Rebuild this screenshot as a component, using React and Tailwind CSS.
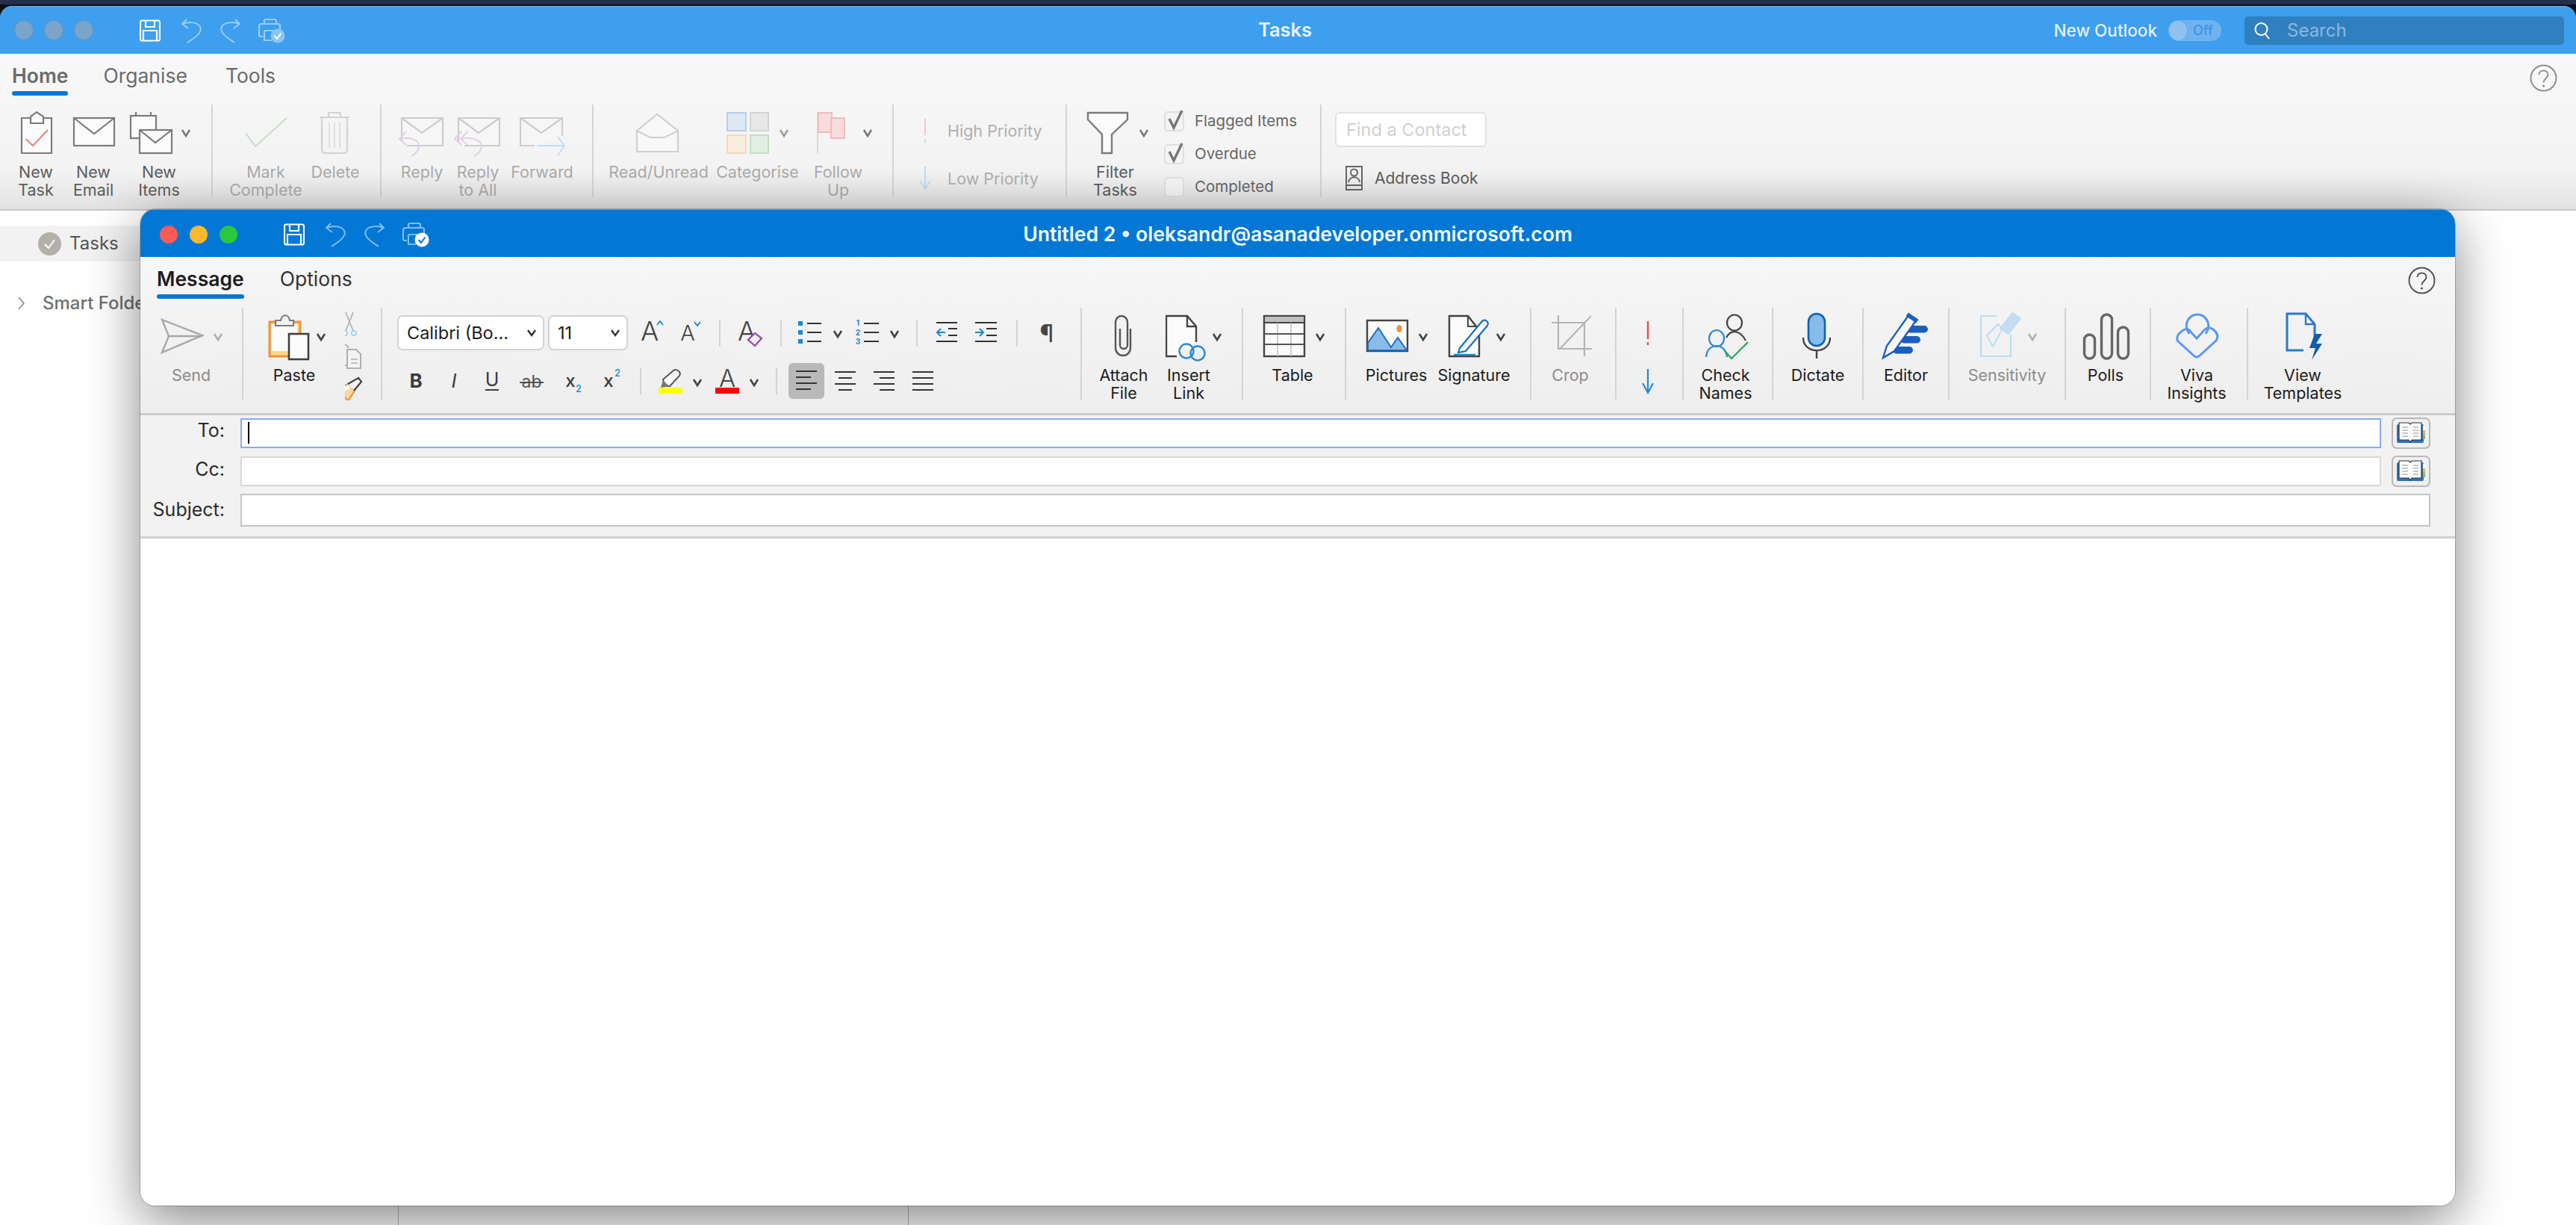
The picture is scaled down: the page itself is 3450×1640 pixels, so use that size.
import React from "react";

const Chev = ({ x, y, c = "#444" }) => (
  <path d={`M${x - 5} ${y - 4}L${x} ${y + 4}L${x + 5} ${y - 4}`} stroke={c} strokeWidth="2.6" fill="none" />
);

function Tool({ w, vb, lines, tone = "text-[#1c1c1c]", labelClass = "", children }) {
  return (
    <div className={`${w} shrink-0 flex flex-col pt-[4px]`}>
      <svg viewBox={vb} className="block w-full h-[70px]" fill="none">
        {children}
      </svg>
      <div className={`mt-[4px] text-[21.5px] leading-[24px] whitespace-nowrap ${tone} ${labelClass}`}>
        {lines.map((l) => (
          <div key={l} className="flex justify-center">{l}</div>
        ))}
      </div>
    </div>
  );
}

const Sep = () => <div className="w-[2px] h-[124px] shrink-0 bg-[#d4d4d4]" />;
const MiniSep = () => <div className="w-[2px] h-[36px] shrink-0 bg-[#d4d4d4]" />;

function Cell({ w, vb, className = "", children }) {
  return (
    <svg viewBox={vb} className={`block shrink-0 h-[47px] ${w} ${className}`} fill="none">
      {children}
    </svg>
  );
}

function Select({ w, label }) {
  return (
    <div className={`${w} h-[47px] shrink-0 flex items-center justify-between pl-[11px] pr-[8px] bg-white border-2 border-[#d2d2d2] rounded-[7px] text-[23.5px] text-[#1c1c1c]`}>
      <span>{label}</span>
      <svg width="14" height="12" viewBox="0 0 14 12" fill="none">
        <path d="M2 2L7 9L12 2" stroke="#333" strokeWidth="2.4" />
      </svg>
    </div>
  );
}

function Lights({ colors, d, className }) {
  return (
    <div className={`flex items-center ${className}`}>
      {colors.map((c, i) => (
        <div key={i} className={`${d} rounded-full ${c}`} />
      ))}
    </div>
  );
}

function QuickBar({ stroke, dim, badge, check }) {
  return (
    <div className="flex items-center ml-[62px]">
      <svg width="28" height="30" viewBox="0 0 28 30" fill="none" stroke={stroke} strokeWidth="2.2">
        <path d="M3 1.5H25Q27 1.5 27 4V26Q27 28.5 25 28.5H3Q1 28.5 1 26V4Q1 1.5 3 1.5Z" />
        <path d="M8 1.5V10H20V1.5M5 28.5V15H23V28.5" />
      </svg>
      <svg width="28" height="34" viewBox="0 0 28 34" fill="none" stroke={dim} strokeWidth="2" className="ml-[27px]">
        <path d="M8 2L2 8L10 14M2 8C16 3 30 8 26 18C24 24 16 28 9 33" />
      </svg>
      <svg width="28" height="34" viewBox="0 0 28 34" fill="none" stroke={dim} strokeWidth="2" className="ml-[25px]">
        <path d="M20 2L26 8L18 14M26 8C12 3 -2 8 2 18C4 24 12 28 19 33" />
      </svg>
      <svg width="36" height="34" viewBox="0 0 36 34" fill="none" stroke={dim} strokeWidth="2.2" className="ml-[23px]">
        <path d="M8 8V4Q8 2 10 2H22Q24 2 24 4V8" />
        <path d="M6 25H3Q1 25 1 23V11Q1 8 4 8H27Q29 8 29 11V16" />
        <path d="M8 17H20M8 17V30H18" />
        <circle cx="26" cy="24" r="9.5" fill={badge} stroke="none" />
        <path d="M21.5 24L25 28L30.5 20.5" stroke={check} strokeWidth="2" />
      </svg>
    </div>
  );
}

function Help({ c, className }) {
  return (
    <svg width="37" height="37" viewBox="0 0 37 37" fill="none" className={className}>
      <circle cx="18.5" cy="18.5" r="17" stroke={c} strokeWidth="2" />
      <path d="M12.5 14C12.5 6.5 24.5 6.5 24.5 14C24.5 19 18.5 19 18.5 24.5" stroke={c} strokeWidth="2" />
      <circle cx="18.5" cy="29" r="1.6" fill={c} />
    </svg>
  );
}

function BackCheck({ checked, label }) {
  return (
    <div className="flex items-center h-[27px]">
      <div className="relative w-[27px] h-[27px] rounded-[5px] bg-[#f4f4f4] border-2 border-[#e0e0e0]">
        {checked && (
          <svg width="28" height="34" viewBox="0 0 28 34" fill="none" className="absolute left-0 -top-[7px]">
            <path d="M5 15L11 27L22 4" stroke="#777" strokeWidth="3.4" />
          </svg>
        )}
      </div>
      <span className="ml-[14px] text-[20.5px] text-[#666]">{label}</span>
    </div>
  );
}

function BackWindow() {
  const faint = "text-[#ababab]";
  const on = "text-[#5c5c5c]";
  return (
    <div className="w-full h-full flex flex-col">
      <div className="h-[8px] shrink-0 bg-[#222f4c] border-b-2 border-[#0b0f18]" />
      <div className="bg-[#0b0f18] shrink-0">
        <div className="h-[64px] flex items-center bg-[#3d9fed] border-t border-[#6db6f0] rounded-t-[16px]">
          <div className="flex-1 flex items-center">
            <Lights
              colors={["bg-[#7ba4cb]", "bg-[#7ba4cb]", "bg-[#7ba4cb]"]}
              d="w-[26px] h-[27px] border border-[#5f93c4]"
              className="pl-[19px] gap-[14px]"
            />
            <QuickBar stroke="#ffffff" dim="#9accf5" badge="#8cc4f4" check="#ffffff" />
          </div>
          <div className="pl-[8px] text-[25.5px] font-semibold text-[#e8f3fd]">Tasks</div>
          <div className="flex-1 flex items-center justify-end pr-[16px]">
            <span className="text-[22.5px] font-medium text-[#e2f0fc]">New Outlook</span>
            <div className="ml-[15px] w-[71px] h-[28px] rounded-full bg-[#6fb3ee] flex items-center">
              <div className="w-[26px] h-[28px] rounded-full bg-[#8fc2f0] border border-[#6aa9e2]" />
              <span className="ml-[7px] text-[18px] font-medium text-[#3a94e6]">Off</span>
            </div>
            <div className="ml-[31px] w-[428px] h-[38px] rounded-[5px] bg-[#3080c0] flex items-center pl-[12px]">
              <svg width="24" height="24" viewBox="0 0 24 24" fill="none" stroke="#fff" strokeWidth="2">
                <circle cx="10.5" cy="10" r="8" />
                <path d="M16 16.5L21 23" />
              </svg>
              <span className="ml-[21px] text-[24px] text-[#8db7de]">Search</span>
            </div>
          </div>
        </div>
      </div>

      <div className="h-[208px] shrink-0 bg-linear-to-b from-[#f8f8f8] via-[#f3f3f3] via-75% to-[#e2e2e2]">
        <div className="h-[68px] flex items-start pt-[13px] pl-[16px] pr-[25px] text-[26.5px] leading-[32px] text-[#6b6b6b]">
          <div className="flex flex-col">
            <span className="font-semibold">Home</span>
            <div className="mt-[5px] h-[6px] rounded-full bg-[#0277d4]" />
          </div>
          <span className="ml-[47px]">Organise</span>
          <span className="ml-[51px]">Tools</span>
          <Help c="#8f8f8f" className="ml-auto mt-[1px]" />
        </div>
        <div className="flex items-start pl-[10px]">
          <Tool w="w-[76px]" vb="10 144 76 70" lines={["New", "Task"]} tone={on}>
            <path d="M29 158H41V156L49 150L58 156V158H69V205H29Z" fill="#fbfbfb" stroke="#7c7c7c" strokeWidth="2.2" />
            <path d="M41 158V165H58V158" stroke="#7c7c7c" strokeWidth="2.2" />
            <path d="M34.5 186L44 195L64 174" stroke="#f07f7f" strokeWidth="2" />
          </Tool>
          <Tool w="w-[78px]" vb="86 144 78 70" lines={["New", "Email"]} tone={on}>
            <rect x="99" y="158" width="54" height="37" fill="#fbfbfb" stroke="#7c7c7c" strokeWidth="2.2" />
            <path d="M99 158L126 179L153 158" stroke="#7c7c7c" strokeWidth="2.2" />
          </Tool>
          <Tool w="w-[119px]" vb="164 144 119 70" lines={["New", "Items"]} tone={on} labelClass="pr-[21px]">
            <rect x="175" y="155" width="34" height="30" fill="#fbfbfb" stroke="#7c7c7c" strokeWidth="2.2" />
            <path d="M182 150V155M202 150V155" stroke="#7c7c7c" strokeWidth="2.2" />
            <rect x="187" y="174" width="43" height="31" fill="#fbfbfb" stroke="#7c7c7c" strokeWidth="2.2" />
            <path d="M187 174L208 191L230 174" stroke="#7c7c7c" strokeWidth="2.2" />
            <Chev x={249} y={178} c="#7c7c7c" />
          </Tool>
          <Sep />
          <Tool w="w-[142px]" vb="285 144 142 70" lines={["Mark", "Complete"]} tone={faint}>
            <path d="M329 178L342 196L384 158" stroke="#c8dcc8" strokeWidth="2" />
          </Tool>
          <Tool w="w-[82px]" vb="427 144 82 70" lines={["Delete"]} tone={faint} labelClass="pr-[38px]">
            <path d="M428 157H468M440 157V151H456V157" stroke="#d2d2d2" strokeWidth="2.2" />
            <path d="M431 158V200Q431 205 436 205H460Q465 205 465 200V158" stroke="#d2d2d2" strokeWidth="2.2" />
            <path d="M441 164V198M448 164V198M455 164V198" stroke="#d8d8d8" strokeWidth="1.4" />
          </Tool>
          <Sep />
          <Tool w="w-[92px]" vb="511 144 92 70" lines={["Reply"]} tone={faint} labelClass="pl-[16px]">
            <path d="M545 195H593V158H538V190" stroke="#cccccc" strokeWidth="2.2" fill="#f6f6f6" />
            <path d="M538 158L565 178L593 158" stroke="#cccccc" strokeWidth="2.2" />
            <path d="M544 176L535 186L544 194M535 186C552 182 566 190 560 200C558 204 555 207 551 209" stroke="#e2cfe8" strokeWidth="2" />
          </Tool>
          <Tool w="w-[74px]" vb="603 144 74 70" lines={["Reply", "to All"]} tone={faint}>
            <path d="M622 195H669V158H614V190" stroke="#cccccc" strokeWidth="2.2" fill="#f6f6f6" />
            <path d="M614 158L641 178L669 158" stroke="#cccccc" strokeWidth="2.2" />
            <path d="M618 176L609 186L618 194M626 176L617 186L626 194M617 186C634 182 650 190 644 200C642 204 639 207 635 209" stroke="#e2cfe8" strokeWidth="2" />
          </Tool>
          <Tool w="w-[116px]" vb="677 144 116 70" lines={["Forward"]} tone={faint} labelClass="pr-[18px]">
            <path d="M716 195H697V158H753V182" stroke="#cccccc" strokeWidth="2.2" fill="#f6f6f6" />
            <path d="M697 158L725 178L753 158" stroke="#cccccc" strokeWidth="2.2" />
            <path d="M720 195H755M747 183L756 195L747 208" stroke="#c3dcf5" strokeWidth="2" />
          </Tool>
          <Sep />
          <Tool w="w-[154px]" vb="795 144 154 70" lines={["Read/Unread"]} tone={faint} labelClass="pl-[20px]">
            <path d="M853 175L880 153L908 175V203H853Z" fill="#f8f8f8" stroke="#d0d0d0" strokeWidth="2.2" />
            <path d="M853 175L871 184H890L908 175" stroke="#d0d0d0" strokeWidth="2.2" />
          </Tool>
          <Tool w="w-[127px]" vb="949 144 127 70" lines={["Categorise"]} tone={faint} labelClass="pl-[4px]">
            <rect x="974" y="151" width="25" height="24" fill="#dfe9f3" stroke="#b6cfe9" strokeWidth="2" />
            <rect x="1005" y="151" width="24" height="24" fill="#e8e8e8" stroke="#d4d4d4" strokeWidth="2" />
            <rect x="974" y="181" width="25" height="24" fill="#f8ecdd" stroke="#f3d9bc" strokeWidth="2" />
            <rect x="1005" y="181" width="24" height="24" fill="#e2eee2" stroke="#c4dec4" strokeWidth="2" />
            <Chev x={1050} y={178} c="#a0a0a0" />
          </Tool>
          <Tool w="w-[119px]" vb="1076 144 119 70" lines={["Follow", "Up"]} tone={faint} labelClass="pr-[26px]">
            <path d="M1095 150V206" stroke="#d4d4d4" strokeWidth="1.6" />
            <rect x="1096" y="151" width="18" height="26" fill="#f9dcdc" stroke="#f4baba" strokeWidth="2" />
            <rect x="1113" y="158" width="18" height="27" fill="#f9dcdc" stroke="#f4baba" strokeWidth="2" />
            <Chev x={1162} y={178} c="#777" />
          </Tool>
          <Sep />
          <div className="w-[230px] shrink-0 flex flex-col text-[21.5px] text-[#b0b0b0]">
            <div className="flex items-center h-[32px] mt-[19px]">
              <svg viewBox="1197 159 72 32" className="w-[72px] h-[32px] shrink-0" fill="none">
                <path d="M1239 159V181M1239 186V191" stroke="#f0c8c8" strokeWidth="2" />
              </svg>
              <span>High Priority</span>
            </div>
            <div className="flex items-center h-[32px] mt-[32px]">
              <svg viewBox="1197 223 72 32" className="w-[72px] h-[32px] shrink-0" fill="none">
                <path d="M1239 223V253M1232 242L1239 253L1246 242" stroke="#bcdcf5" strokeWidth="2" />
              </svg>
              <span>Low Priority</span>
            </div>
          </div>
          <Sep />
          <Tool w="w-[126px]" vb="1429 144 126 70" lines={["Filter", "Tasks"]} tone={on} labelClass="pl-[3px]">
            <path d="M1457 151H1510V160L1489 180V205H1476V180L1457 160Z" fill="#fbfbfb" stroke="#7c7c7c" strokeWidth="2.4" />
            <Chev x={1532} y={178} c="#7c7c7c" />
          </Tool>
          <div className="w-[213px] shrink-0 flex flex-col gap-[17px] pl-[4px] pt-[9px]">
            <BackCheck checked label="Flagged Items" />
            <BackCheck checked label="Overdue" />
            <BackCheck label="Completed" />
          </div>
          <Sep />
          <div className="flex flex-col">
            <div className="ml-[18px] mt-[10px] w-[203px] h-[47px] flex items-center pl-[13px] bg-white border-2 border-[#e2e2e2] rounded-[6px] text-[23.5px] text-[#d0d0d0]">
              Find a Contact
            </div>
            <div className="ml-[31px] mt-[25px] flex items-center">
              <svg width="24" height="33" viewBox="0 0 24 33" fill="none" stroke="#666" strokeWidth="2">
                <rect x="2" y="1" width="21" height="31" />
                <path d="M2 26H23" />
                <circle cx="12.5" cy="9" r="4.5" />
                <path d="M5 22C6 13 19 13 20 22" />
              </svg>
              <span className="ml-[16px] text-[21px] text-[#5c5c5c]">Address Book</span>
            </div>
          </div>
        </div>
      </div>

      <div className="flex-1 flex border-t-2 border-[#c8c8c8]">
        <div className="w-[534px] shrink-0 border-r border-[#b8b8b8] text-[24px]">
          <div className="mt-[20px] h-[48px] flex items-center pl-[51px] bg-[#f2f2f2] text-[#555]">
            <svg width="31" height="31" viewBox="0 0 31 31" fill="none">
              <circle cx="15.5" cy="15.5" r="15.5" fill="#b3afaa" />
              <path d="M9 16L14 21L22 10" stroke="#fff" strokeWidth="2" />
            </svg>
            <span className="ml-[11px]">Tasks</span>
          </div>
          <div className="mt-[32px] h-[48px] flex items-center pl-[24px] text-[#707070] font-medium">
            <svg width="9" height="18" viewBox="0 0 9 18" fill="none">
              <path d="M1 1L8 9L1 17" stroke="#888" strokeWidth="1.6" />
            </svg>
            <span className="ml-[24px] whitespace-nowrap">Smart Folders</span>
          </div>
        </div>
        <div className="w-[683px] shrink-0 border-r border-[#b8b8b8]" />
      </div>
    </div>
  );
}

function Ribbon() {
  const off = "text-[#8c8c8c]";
  return (
    <div className="flex items-start">
      <Tool w="w-[136px]" vb="188 416 136 70" lines={["Send"]} tone={off}>
        <path d="M217 428L271 449L217 472L226 450Z" stroke="#a8a8a8" strokeWidth="2.4" />
        <path d="M226 450H271" stroke="#a8a8a8" strokeWidth="2.4" />
        <Chev x={292} y={451} c="#b0b0b0" />
      </Tool>
      <Sep />
      <Tool w="w-[136px]" vb="326 416 136 70" lines={["Paste"]}>
        <rect x="361" y="431" width="41" height="46" fill="#fbd98d" stroke="#f0923a" strokeWidth="3" />
        <rect x="364" y="434" width="34" height="36" fill="#fbfbfb" />
        <path d="M369 436V429H376C377 420 387 420 388 429H393V436Z" fill="#f4f4f4" stroke="#7c7c7c" strokeWidth="2.2" />
        <rect x="387" y="447" width="26" height="34" fill="#fbfbfb" stroke="#404040" strokeWidth="2.6" />
        <Chev x={430} y={451} />
      </Tool>
      <svg viewBox="462 412 48 124" className="block w-[48px] h-[124px] shrink-0" fill="none">
        <path d="M463 418L473 443M473 418L463 443" stroke="#b4b4b4" strokeWidth="1.8" />
        <circle cx="462" cy="446" r="3.2" stroke="#a8cdf0" strokeWidth="1.8" />
        <circle cx="474" cy="446" r="3.2" stroke="#a8cdf0" strokeWidth="1.8" />
        <path d="M465 489H453V462H464L467 466" stroke="#b0b0b0" strokeWidth="2" />
        <path d="M465 468H477L483 474V493H465Z" fill="#f3f3f3" stroke="#b0b0b0" strokeWidth="2" />
        <path d="M470 481H479M470 486H479" stroke="#b0b0b0" strokeWidth="1.4" />
        <path d="M453 521L466 514L475 523L466 537Z" fill="#fbd59a" stroke="#f0923a" strokeWidth="2.2" />
        <path d="M457 520L466 515L470 519L461 524Z" fill="#fbfbfb" />
        <path d="M466 514L480 506L484 511L474 523" fill="#f4f4f4" stroke="#404040" strokeWidth="2.2" />
      </svg>
      <Sep />
      <div className="w-[935px] shrink-0 flex flex-col pl-[20px] pt-[10px] text-[#404040]">
        <div className="flex items-center">
          <Select w="w-[197px]" label="Calibri (Bo..." />
          <div className="ml-[5px]" />
          <Select w="w-[107px]" label="11" />
          <Cell w="w-[59px]" vb="841 422 59 47">
            <text x="870" y="456" textAnchor="middle" fontSize="36" fontWeight="300" fill="#444">A</text>
            <path d="M880 435L884 430L888 435" stroke="#1e88d2" strokeWidth="2" />
          </Cell>
          <Cell w="w-[63px]" vb="900 422 63 47">
            <text x="921" y="456" textAnchor="middle" fontSize="29" fontWeight="300" fill="#444">A</text>
            <path d="M930 431L934 436L938 431" stroke="#1e88d2" strokeWidth="2" />
          </Cell>
          <MiniSep />
          <Cell w="w-[80px]" vb="965 422 80 47">
            <text x="1000" y="456" textAnchor="middle" fontSize="36" fontWeight="300" fill="#444">A</text>
            <path d="M1011 446L1020 453L1011 463L1002 455Z" fill="#f3f3f3" stroke="#9c3fb0" strokeWidth="2.2" />
          </Cell>
          <MiniSep />
          <Cell w="w-[86px]" vb="1047 422 86 47">
            <rect x="1069" y="430" width="6" height="6" fill="#1e88d2" />
            <rect x="1069" y="442" width="6" height="6" fill="#1e88d2" />
            <rect x="1069" y="454" width="6" height="6" fill="#1e88d2" />
            <path d="M1081 433H1100M1081 445H1100M1081 457H1100" stroke="#333" strokeWidth="2" />
            <Chev x={1122} y={447} />
          </Cell>
          <Cell w="w-[94px]" vb="1133 422 94 47">
            <text x="1149" y="436" textAnchor="middle" fontSize="10" fontWeight="700" fill="#1e88d2">1</text>
            <text x="1149" y="449" textAnchor="middle" fontSize="10" fontWeight="700" fill="#1e88d2">2</text>
            <text x="1149" y="461" textAnchor="middle" fontSize="10" fontWeight="700" fill="#1e88d2">3</text>
            <path d="M1157 433H1177M1157 445H1177M1157 457H1177" stroke="#333" strokeWidth="2" />
            <Chev x={1198} y={447} />
          </Cell>
          <MiniSep />
          <Cell w="w-[66px]" vb="1229 422 66 47">
            <path d="M1254 432H1282M1254 457H1282M1270 440H1282M1270 449H1282" stroke="#333" strokeWidth="2" />
            <path d="M1266 445H1255M1260 440L1255 445L1260 450" stroke="#1e88d2" strokeWidth="2" />
          </Cell>
          <Cell w="w-[66px]" vb="1295 422 66 47">
            <path d="M1306 432H1335M1306 457H1335M1321 440H1335M1321 449H1335" stroke="#333" strokeWidth="2" />
            <path d="M1306 445H1317M1312 440L1317 445L1312 450" stroke="#1e88d2" strokeWidth="2" />
          </Cell>
          <MiniSep />
          <Cell w="w-[84px]" vb="1363 422 84 47">
            <text x="1402" y="458" textAnchor="middle" fontSize="32" fontWeight="400" fill="#444">¶</text>
          </Cell>
        </div>
        <div className="flex items-center mt-[17px]">
          <Cell w="w-[50px]" vb="532 486 50 47">
            <text x="557" y="518" textAnchor="middle" fontSize="26" fontWeight="700" fill="#3c3c3c">B</text>
          </Cell>
          <Cell w="w-[51px]" vb="582 486 51 47">
            <text x="608" y="518" textAnchor="middle" fontSize="26" fontStyle="italic" fill="#3c3c3c">I</text>
          </Cell>
          <Cell w="w-[52px]" vb="633 486 52 47">
            <text x="659" y="516" textAnchor="middle" fontSize="25" fill="#3c3c3c">U</text>
            <path d="M650 521H668" stroke="#3c3c3c" strokeWidth="2" />
          </Cell>
          <Cell w="w-[55px]" vb="685 486 55 47">
            <text x="712" y="518" textAnchor="middle" fontSize="23" fill="#555">ab</text>
            <path d="M696 511H728" stroke="#444" strokeWidth="1.8" />
          </Cell>
          <Cell w="w-[52px]" vb="740 486 52 47">
            <text x="764" y="517" textAnchor="middle" fontSize="24" fontWeight="500" fill="#3c3c3c">x</text>
            <text x="775" y="524" textAnchor="middle" fontSize="13" fontWeight="500" fill="#1e88d2">2</text>
          </Cell>
          <Cell w="w-[65px]" vb="792 486 65 47">
            <text x="815" y="517" textAnchor="middle" fontSize="24" fontWeight="500" fill="#3c3c3c">x</text>
            <text x="827" y="503" textAnchor="middle" fontSize="13" fontWeight="500" fill="#1e88d2">2</text>
          </Cell>
          <MiniSep />
          <Cell w="w-[86px]" vb="859 486 86 47">
            <path d="M888 507L902 495C906 492 913 497 910 502L897 516H889Z" fill="#f8f8f8" stroke="#555" strokeWidth="2" />
            <path d="M885 518L888 508L896 516Z" fill="#777" />
            <rect x="882" y="518" width="32" height="8" fill="#ffff00" />
            <Chev x={934} y={511} />
          </Cell>
          <Cell w="w-[94px]" vb="945 486 94 47">
            <text x="974" y="517" textAnchor="middle" fontSize="33" fontWeight="300" fill="#444">A</text>
            <rect x="958" y="518" width="32" height="8" fill="#ff0000" />
            <Chev x={1010} y={511} />
          </Cell>
          <MiniSep />
          <div className="ml-[15px] w-[48px] h-[48px] shrink-0 rounded-[6px] bg-[#b9b9b9]">
            <Cell w="w-[48px]" vb="1056 486 48 47">
              <path d="M1066 497H1094M1066 505H1086M1066 513H1094M1066 521H1086" stroke="#333" strokeWidth="2" />
            </Cell>
          </div>
          <Cell w="w-[54px]" vb="1104 486 54 47">
            <path d="M1118 497H1146M1123 505H1141M1118 513H1146M1123 521H1141" stroke="#333" strokeWidth="2" />
          </Cell>
          <Cell w="w-[52px]" vb="1158 486 52 47">
            <path d="M1170 497H1198M1178 505H1198M1170 513H1198M1178 521H1198" stroke="#333" strokeWidth="2" />
          </Cell>
          <Cell w="w-[52px]" vb="1210 486 52 47">
            <path d="M1222 497H1250M1222 505H1250M1222 513H1250M1222 521H1250" stroke="#333" strokeWidth="2" />
          </Cell>
        </div>
      </div>
      <Sep />
      <Tool w="w-[112px]" vb="1449 416 112 70" lines={["Attach", "File"]}>
        <path d="M1514 440V466A10 10 0 0 1 1494 466V431A8 8 0 0 1 1510 431V462A5 5 0 0 1 1500 462V440" stroke="#555" strokeWidth="2.4" />
      </Tool>
      <Tool w="w-[102px]" vb="1561 416 102 70" lines={["Insert", "Link"]} labelClass="pr-[40px]">
        <path d="M1576 477H1562V423H1590L1602 437V458" fill="#fbfbfb" stroke="#444" strokeWidth="2.4" />
        <path d="M1590 423V437H1602" stroke="#444" strokeWidth="2.4" />
        <circle cx="1589" cy="470" r="9.5" stroke="#2a8ad4" strokeWidth="2.4" />
        <circle cx="1604" cy="473" r="9.5" stroke="#2a8ad4" strokeWidth="2.4" />
        <Chev x={1630} y={451} />
      </Tool>
      <Sep />
      <Tool w="w-[136px]" vb="1665 416 136 70" lines={["Table"]} labelClass="pr-[4px]">
        <rect x="1693" y="423" width="54" height="54" fill="#fbfbfb" stroke="#444" strokeWidth="2.4" />
        <rect x="1693" y="423" width="54" height="9" fill="#c0c0c0" stroke="#444" strokeWidth="2" />
        <path d="M1711 432V477M1729 432V477" stroke="#bbb" strokeWidth="1.4" />
        <path d="M1693 447H1747M1693 461H1747" stroke="#555" strokeWidth="2" />
        <Chev x={1768} y={451} />
      </Tool>
      <Sep />
      <Tool w="w-[134px]" vb="1803 416 134 70" lines={["Pictures"]}>
        <rect x="1831" y="429" width="54" height="41" fill="#fbfbfb" stroke="#444" strokeWidth="2.4" />
        <path d="M1832 459L1846 439L1863 465L1872 452L1884 469H1832Z" fill="#8abcea" stroke="#1a6fc0" strokeWidth="2" />
        <ellipse cx="1874" cy="440" rx="3.5" ry="5" fill="#f0923a" />
        <Chev x={1906} y={451} />
      </Tool>
      <Tool w="w-[112px]" vb="1937 416 112 70" lines={["Signature"]} labelClass="pr-[38px]">
        <path d="M1941 423H1966L1981 442V477H1941Z" fill="#fbfbfb" stroke="#444" strokeWidth="2.4" />
        <path d="M1966 423V437H1977" stroke="#444" strokeWidth="2" />
        <path d="M1955 466L1985 430C1988 426 1995 431 1992 436L1963 470L1953 472Z" fill="#fbfbfb" stroke="#1a6fc0" strokeWidth="2.2" />
        <path d="M1947 475H1976" stroke="#1e88d2" strokeWidth="2.4" />
        <Chev x={2010} y={451} />
      </Tool>
      <Sep />
      <Tool w="w-[112px]" vb="2051 416 112 70" lines={["Crop"]} tone={off} labelClass="pr-[8px]">
        <path d="M2087 422V467H2132M2078 432H2122V477" stroke="#b4b4b4" strokeWidth="2.2" />
        <path d="M2131 423L2089 467" stroke="#b4b4b4" strokeWidth="2" />
      </Tool>
      <Sep />
      <svg viewBox="2165 412 88 124" className="block w-[88px] h-[124px] shrink-0" fill="none">
        <path d="M2207 430V454M2207 458V462" stroke="#e84c4c" strokeWidth="2.4" />
        <path d="M2207 494V525M2200 513L2207 526L2214 513" stroke="#2a8ad4" strokeWidth="2.2" />
      </svg>
      <Sep />
      <Tool w="w-[118px]" vb="2255 416 118 70" lines={["Check", "Names"]} labelClass="pr-[6px]">
        <ellipse cx="2323" cy="432" rx="10" ry="10.5" stroke="#444" strokeWidth="2.2" />
        <path d="M2312 452C2318 441 2330 441 2338 456" stroke="#444" strokeWidth="2.2" />
        <ellipse cx="2299" cy="453" rx="10" ry="11" stroke="#2a8ad4" strokeWidth="2.2" />
        <path d="M2285 478C2286 465 2295 463 2299 463C2306 463 2312 469 2313 478" stroke="#2a8ad4" strokeWidth="2.2" />
        <path d="M2310 470L2319 480L2341 458" stroke="#22a84f" strokeWidth="2.2" />
      </Tool>
      <Sep />
      <Tool w="w-[119px]" vb="2375 416 119 70" lines={["Dictate"]}>
        <rect x="2422" y="420" width="22" height="43" rx="11" fill="#86bbea" stroke="#0f62b0" strokeWidth="2.6" />
        <path d="M2415 452C2415 475 2451 475 2451 452M2433 468V480" stroke="#444" strokeWidth="2.4" />
      </Tool>
      <Sep />
      <Tool w="w-[113px]" vb="2496 416 113 70" lines={["Editor"]}>
        <rect x="2552" y="436" width="30" height="9.5" rx="4.7" fill="#1a5fbf" />
        <rect x="2545" y="450" width="27" height="9.5" rx="4.7" fill="#1a5fbf" />
        <rect x="2535" y="464" width="27" height="9.5" rx="4.7" fill="#1a5fbf" />
        <path d="M2522 479L2527 463L2557 421L2567 428L2537 470Z" fill="#f8f8f8" stroke="#1a5fbf" strokeWidth="2.4" />
        <path d="M2556 420L2568 428L2566 431L2554 423Z" fill="#1a5fbf" stroke="#1a5fbf" strokeWidth="2" />
      </Tool>
      <Sep />
      <Tool w="w-[154px]" vb="2611 416 154 70" lines={["Sensitivity"]} tone={off}>
        <path d="M2674 423H2653V477H2693V448" stroke="#bcdcf2" strokeWidth="2.2" />
        <path d="M2679 440L2695 419L2706 426L2690 447Z" fill="#c5ddf0" stroke="#bcdcf2" strokeWidth="1.8" />
        <path d="M2661 449L2676 434L2682 440L2669 464Z" stroke="#bcdcf2" strokeWidth="2" />
        <Chev x={2722} y={451} c="#b0b0b0" />
      </Tool>
      <Sep />
      <Tool w="w-[112px]" vb="2767 416 112 70" lines={["Polls"]} labelClass="pr-[6px]">
        <rect x="2791.5" y="448" width="14" height="32" rx="7" stroke="#666" strokeWidth="3.4" />
        <rect x="2814.5" y="421" width="14" height="59" rx="7" stroke="#666" strokeWidth="3.4" />
        <rect x="2836.5" y="438" width="14" height="42" rx="7" stroke="#666" strokeWidth="3.4" />
      </Tool>
      <Sep />
      <Tool w="w-[128px]" vb="2881 416 128 70" lines={["Viva", "Insights"]} labelClass="pr-[6px]">
        <path d="M2932 447C2922 432 2934 421 2943 421C2952 421 2964 432 2954 447" stroke="#5b96f5" strokeWidth="3" />
        <path d="M2924 442Q2914 448 2916 456L2938 476Q2942 480 2946 476L2968 456Q2973 448 2964 441Q2958 436 2952 442L2942 453L2932 442Q2929 439 2924 442Z" stroke="#5b96f5" strokeWidth="3" />
      </Tool>
      <Sep />
      <Tool w="w-[146px]" vb="3011 416 146 70" lines={["View", "Templates"]}>
        <path d="M3085 469H3063V420H3088L3100 434V452" stroke="#2a78c8" strokeWidth="3" />
        <path d="M3088 420V434H3100" stroke="#2a78c8" strokeWidth="2.4" />
        <path d="M3100 447L3093 466H3101L3096 482L3110 460H3102L3110 447Z" fill="#0f5fa8" />
      </Tool>
    </div>
  );
}

function BookBtn() {
  return (
    <div className="ml-[14px] w-[52px] h-[42px] shrink-0 flex items-center justify-center rounded-[7px] bg-[#f0f0f0] border-2 border-[#b8b8b8]">
      <svg width="40" height="30" viewBox="0 0 40 30" fill="none">
        <rect x="1" y="3" width="36" height="25" rx="2" fill="#2f74bb" />
        <rect x="36" y="5" width="3" height="6" fill="#ffffff" />
        <rect x="36" y="11" width="3" height="6" fill="#e3b63c" />
        <rect x="36" y="17" width="3" height="6" fill="#8fb86a" />
        <path d="M4 1H17L19 3L21 1H34V24H21L19 27L17 24H4Z" fill="#fbfbfb" stroke="#333" strokeWidth="1.2" />
        <path d="M8 7H16M8 11H16M8 15H16M8 19H16M23 7H30M23 11H30M23 15H30M23 19H30" stroke="#b8b8b8" strokeWidth="1.6" />
      </svg>
    </div>
  );
}

function ComposeWindow() {
  return (
    <div className="absolute left-[188px] top-[280px] w-[3100px] h-[1334px] flex flex-col overflow-hidden rounded-[20px] bg-white shadow-[0_20px_70px_0_rgba(0,0,0,0.48),0_0_0_1px_rgba(0,0,0,0.2)]">
      <div className="h-[64px] shrink-0 flex items-center pt-[2px] bg-[#0277d4] border-t border-[#4f9fe2]">
        <div className="flex-1 flex items-center">
          <Lights
            colors={["bg-[#fb5b56]", "bg-[#fdb92e]", "bg-[#28c93f]"]}
            d="w-[24px] h-[24px]"
            className="pl-[26px] gap-[16px]"
          />
          <QuickBar stroke="#ffffff" dim="#7fbcee" badge="#ffffff" check="#0277d4" />
        </div>
        <div className="text-[26.6px] font-semibold text-[#f2f8fd] whitespace-nowrap">
          Untitled 2 • oleksandr@asanadeveloper.onmicrosoft.com
        </div>
        <div className="flex-1" />
      </div>

      <div className="h-[212px] shrink-0 bg-linear-to-b from-[#f7f7f7] via-[#f2f2f2] to-[#eeeeee] border-b-[3px] border-[#cccccc]">
        <div className="h-[68px] flex items-start pt-[13px] pl-[22px] pr-[26px] text-[26.5px] leading-[32px]">
          <div className="flex flex-col">
            <span className="font-semibold text-[#1c1c1c]">Message</span>
            <div className="mt-[5px] h-[6px] rounded-full bg-[#0277d4]" />
          </div>
          <span className="ml-[48px] text-[#333]">Options</span>
          <Help c="#555" className="ml-auto" />
        </div>
        <Ribbon />
      </div>

      <div className="h-[165px] shrink-0 flex flex-col bg-[#f2f2f2] border-b-[3px] border-[#d0d0d0] text-[25px] text-[#2b2b2b]">
        <div className="flex items-center mt-[2px] pr-[33px]">
          <div className="w-[113px] pb-[6px] text-right shrink-0">To:</div>
          <div className="ml-[21px] h-[40px] flex-1 flex items-center pl-[8px] bg-white border-2 border-[#85aef0]">
            <div className="w-[2px] h-[29px] bg-black" />
          </div>
          <BookBtn />
        </div>
        <div className="flex items-center mt-[8px] pr-[33px]">
          <div className="w-[113px] pb-[6px] text-right shrink-0">Cc:</div>
          <div className="ml-[21px] h-[40px] flex-1 bg-white border-2 border-[#d8d8d8]" />
          <BookBtn />
        </div>
        <div className="flex items-center mt-[8px] pr-[33px]">
          <div className="w-[113px] text-right shrink-0">Subject:</div>
          <div className="ml-[21px] h-[44px] flex-1 bg-white border-2 border-[#c4c4c4]" />
        </div>
      </div>

      <div className="flex-1 bg-white" />
    </div>
  );
}

export default function App() {
  return (
    <div className="relative w-[3450px] h-[1640px] overflow-hidden bg-white font-[Inter,sans-serif]">
      <BackWindow />
      <ComposeWindow />
    </div>
  );
}
